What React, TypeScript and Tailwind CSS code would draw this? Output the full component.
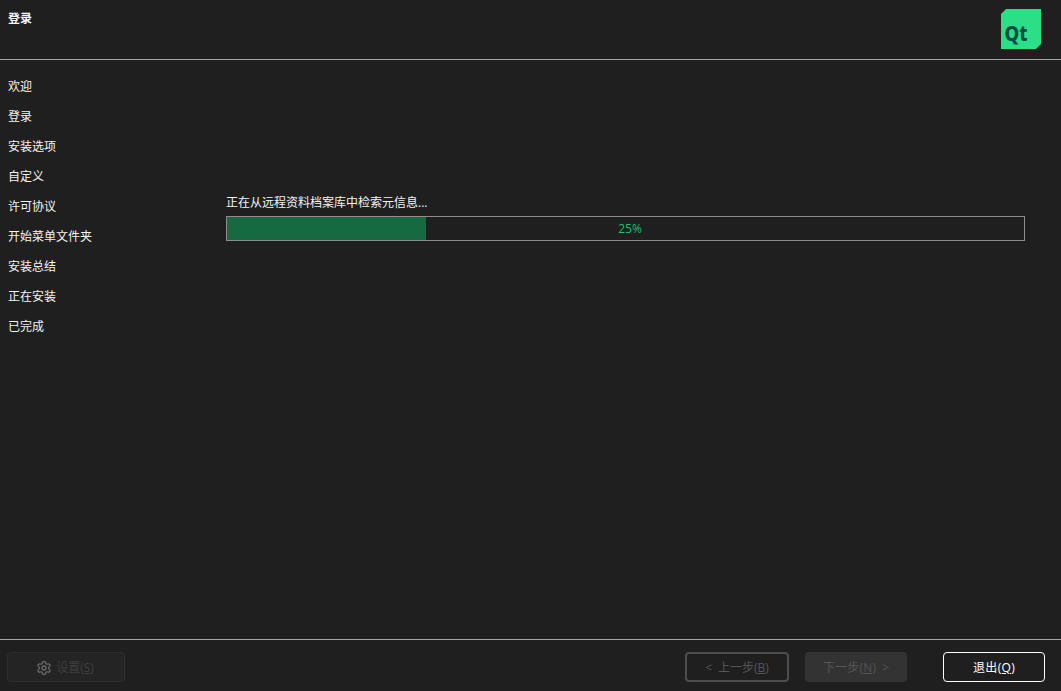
import { Settings } from 'lucide-react';

const steps = ['欢迎', '登录', '安装选项', '自定义', '许可协议', '开始菜单文件夹', '安装总结', '正在安装', '已完成'];

function QtLogo() {
  return (
    <svg width="40" height="40" viewBox="0 0 40 40" className="block">
      <polygon points="5,0 40,0 40,35 35,40 0,40 0,5" fill="#2cde85" />
      <text x="3.5" y="32" fontFamily="'Noto Sans', sans-serif" fontWeight="800" fontSize="21" textLength="23" lengthAdjust="spacingAndGlyphs" fill="#0a4a48">Qt</text>
    </svg>
  );
}

export default function App() {
  return (
    <div className="h-[691px] w-[1061px] flex flex-col overflow-hidden bg-[#1f1f1f] text-[12px] text-[#f4f4f4] font-['Open_Sans','Noto_Sans_CJK_SC',sans-serif]">
      <header className="h-[60px] shrink-0 flex justify-between border-b border-[#a3a3a3] pl-2 pr-5">
        <div className="pt-[10px] font-bold leading-[18px]">登录</div>
        <div className="pt-[9px]">
          <QtLogo />
        </div>
      </header>

      <div className="flex-1 flex min-h-0">
        <nav className="w-[226px] shrink-0 pt-[12px] pl-2">
          {steps.map(s => (
            <div key={s} className="h-[30px] leading-[30px]">{s}</div>
          ))}
        </nav>
        <main className="flex-1 pt-[133px] pr-9">
          <div className="h-[20px] leading-[20px] mb-[3px]">正在从远程资料档案库中检索元信息...</div>
          <div className="h-[25px] border border-[#8c8c8c] flex relative">
            <div className="w-[199px] bg-[#166a41]" />
            <div className="absolute inset-0 flex items-center justify-center pl-[9px] text-[#1fc16b] leading-none">25%</div>
          </div>
        </main>
      </div>

      <footer className="h-[52px] shrink-0 border-t border-[#a3a3a3] flex items-start pt-3 pl-[7px] pr-4">
        <button className="w-[118px] h-[30px] pt-px pr-[2px] rounded border border-[#2e2e2e] bg-[#242424] text-[#3f3f3f] flex items-center justify-center gap-[4px]">
          <Settings size={16} className="text-[#6a6a6a]" />
          <span>设置(<span className="underline">S</span>)</span>
        </button>
        <div className="flex-1" />
        <button className="w-[104px] h-[30px] pt-px rounded border-2 border-[#4d4d4d] text-[#555555] flex items-center justify-center gap-[6px]">
          <span>{'<'}</span>
          <span>上一步(<span className="underline">B</span>)</span>
        </button>
        <button className="ml-4 w-[102px] h-[30px] pt-px rounded bg-[#333333] text-[#555555] flex items-center justify-center gap-[6px]">
          <span className="tracking-[0.2px]">下一步(<span className="underline">N</span>)</span>
          <span>{'>'}</span>
        </button>
        <button className="ml-9 w-[102px] h-[30px] pt-px rounded border border-white text-white tracking-[0.3px]">
          退出(<span className="underline">Q</span>)
        </button>
      </footer>
    </div>
  );
}
